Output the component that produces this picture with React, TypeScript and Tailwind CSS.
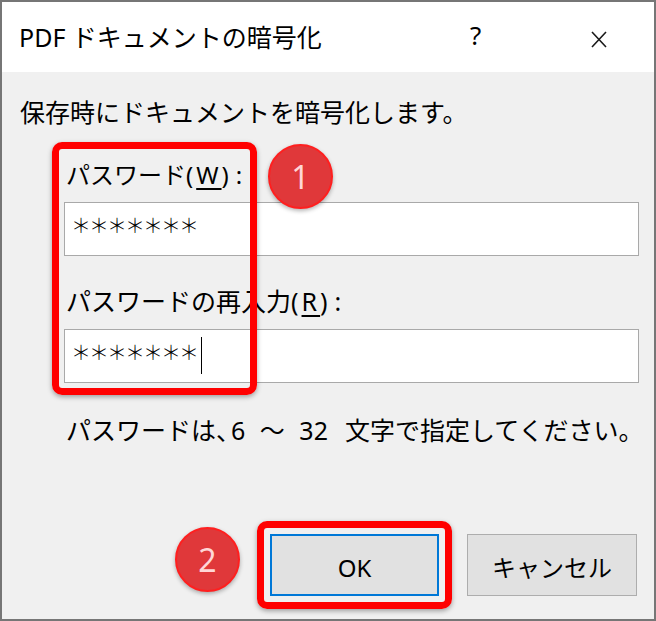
import React from 'react';

const font = { fontFamily: '"Noto Sans", "Noto Sans CJK JP", sans-serif' };

function Marker({ n, className }: { n: string; className: string }) {
  return (
    <div
      className={`absolute w-[65px] h-[65px] rounded-full bg-[#e0383a] border-2 border-[#ff1f1f] shadow-[0_2px_4px_rgba(0,0,0,0.3)] flex items-center justify-center text-[32px] leading-none text-[#ffd6d6] ${className}`}
    >
      {n}
    </div>
  );
}

function PasswordBox({ value, caret }: { value: string; caret?: boolean }) {
  return (
    <div className="w-[575px] h-[54px] bg-white border border-[#a9a9a9] flex items-center pl-[6px]">
      <span
        className="text-[20px] tracking-[-2px] leading-none font-light relative top-[-4px]"
        style={{ fontFamily: '"Noto Sans CJK JP", sans-serif' }}
      >
        {value}
      </span>
      {caret && <span className="w-px h-[37px] bg-black ml-[4px] relative top-[-1px]" />}
    </div>
  );
}

export default function App() {
  return (
    <div
      className="relative w-[656px] h-[621px] border-2 border-[#767676] bg-[#f0f0f0] flex flex-col text-black overflow-hidden"
      style={font}
    >
      {/* タイトルバー */}
      <div className="h-[70px] bg-white flex items-center pl-[17px] shrink-0">
        <span className="text-[25px] leading-none">PDF ドキュメントの暗号化</span>
        <span className="absolute left-[468px] top-[20px] text-[26px] leading-none">?</span>
        <svg className="absolute left-[589px] top-[29px]" width="16" height="17" viewBox="0 0 16 17">
          <path d="M1 1 L15 16 M15 1 L1 16" stroke="#1a1a1a" strokeWidth="1.6" fill="none" />
        </svg>
      </div>

      {/* 本文 */}
      <div className="pl-[18px] pt-[24px] flex flex-col">
        <p className="text-[25px] leading-[32px]">保存時にドキュメントを暗号化します。</p>

        <div className="ml-[44px] mt-[33px] flex flex-col">
          <label className="text-[24px] leading-[32px] pl-[2px] -mt-[2px]">
            パスワード<span className="tracking-[3px]">(<span className="underline underline-offset-4">W</span>)</span>
            <span className="ml-[4px]">:</span>
          </label>
          <div className="mt-[11px]">
            <PasswordBox value="＊＊＊＊＊＊＊" />
          </div>
          <label className="mt-[29px] text-[25px] leading-[32px] pl-[2px]">
            パスワードの再入力<span className="tracking-[3px]">(<span className="underline underline-offset-4">R</span>)</span>
            <span className="ml-[4px]">:</span>
          </label>
          <div className="mt-[12px]">
            <PasswordBox value="＊＊＊＊＊＊＊" caret />
          </div>
          <p className="mt-[31px] text-[25px] leading-[32px] pl-[2px]">
            パスワードは<span className="tracking-[-10px]">、</span>6
            <span className="inline-block w-[54px] text-center">～</span>32
            <span className="inline-block w-[17px]" />
            文字で指定してください。
          </p>
        </div>

        <div className="mt-[88px] flex justify-end gap-[28px] pr-[17px]">
          <div className="relative">
            <button className="w-[169px] h-[62px] pt-[5px] bg-[#e1e1e1] border-2 border-[#0078d7] text-[24px] leading-none">
              OK
            </button>
            <div className="absolute -inset-[13px] border-[7px] border-[#ff0000] rounded-[10px] shadow-[0_2px_5px_rgba(0,0,0,0.35)] pointer-events-none" />
          </div>
          <button className="w-[170px] h-[62px] pt-[5px] bg-[#e1e1e1] border border-[#adadad] text-[24px] leading-none">
            キャンセル
          </button>
        </div>
      </div>

      {/* 注釈 */}
      <div className="absolute left-[50px] top-[140px] w-[205px] h-[253px] border-[7px] border-[#ff0000] rounded-[10px] shadow-[0_2px_5px_rgba(0,0,0,0.35)] pointer-events-none" />
      <Marker n="1" className="left-[266px] top-[142px]" />
      <Marker n="2" className="left-[173px] top-[525px]" />
    </div>
  );
}
